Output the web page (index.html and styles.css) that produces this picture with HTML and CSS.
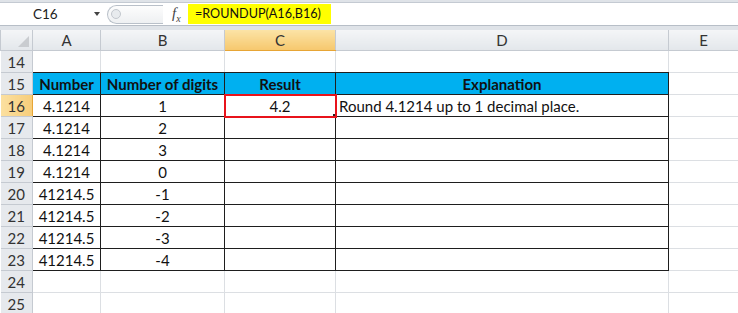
FILE: index.html
```html
<!DOCTYPE html>
<html>
<head>
    <title>ROUNDUP example</title>
    <link rel="stylesheet" href="styles.css">
</head>
<body>

<!-- Formula bar -->
<div class="top-strip"></div>
<div class="formula-bar">
    <div class="name-box">
        <span class="cell-ref">C16</span>
        <span class="drop"></span>
    </div>
    <div class="splitter"><span class="knob"></span></div>
    <div class="fx"><i>f</i><sub>x</sub></div>
    <div class="formula"><span class="hl">=ROUNDUP(A16,B16)</span></div>
</div>
<div class="bar-gap"></div>

<!-- Sheet -->
<table class="sheet">
    <colgroup>
        <col style="width:32px">
        <col style="width:68px">
        <col style="width:124px">
        <col style="width:111px">
        <col style="width:333px">
        <col style="width:70px">
    </colgroup>
    <tr class="col-heads">
        <th class="corner"><span class="tri"></span></th>
        <th>A</th>
        <th>B</th>
        <th class="sel">C</th>
        <th>D</th>
        <th>E</th>
    </tr>
    <tr>
        <th class="row-head">14</th>
        <td class="above"></td><td class="above"></td><td class="above"></td><td class="above"></td><td></td>
    </tr>
    <tr class="head-row">
        <th class="row-head">15</th>
        <td class="t">Number</td>
        <td class="t">Number of digits</td>
        <td class="t">Result</td>
        <td class="t">Explanation</td>
        <td></td>
    </tr>
    <tr>
        <th class="row-head sel">16</th>
        <td class="t">4.1214</td>
        <td class="t">1</td>
        <td class="t active">4.2</td>
        <td class="t left">Round 4.1214 up to 1 decimal place.</td>
        <td></td>
    </tr>
    <tr>
        <th class="row-head">17</th>
        <td class="t">4.1214</td><td class="t">2</td><td class="t"></td><td class="t"></td><td></td>
    </tr>
    <tr>
        <th class="row-head">18</th>
        <td class="t">4.1214</td><td class="t">3</td><td class="t"></td><td class="t"></td><td></td>
    </tr>
    <tr>
        <th class="row-head">19</th>
        <td class="t">4.1214</td><td class="t">0</td><td class="t"></td><td class="t"></td><td></td>
    </tr>
    <tr>
        <th class="row-head">20</th>
        <td class="t">41214.5</td><td class="t">-1</td><td class="t"></td><td class="t"></td><td></td>
    </tr>
    <tr>
        <th class="row-head">21</th>
        <td class="t">41214.5</td><td class="t">-2</td><td class="t"></td><td class="t"></td><td></td>
    </tr>
    <tr>
        <th class="row-head">22</th>
        <td class="t">41214.5</td><td class="t">-3</td><td class="t"></td><td class="t"></td><td></td>
    </tr>
    <tr>
        <th class="row-head">23</th>
        <td class="t">41214.5</td><td class="t">-4</td><td class="t"></td><td class="t"></td><td></td>
    </tr>
    <tr>
        <th class="row-head">24</th>
        <td></td><td></td><td></td><td></td><td></td>
    </tr>
    <tr>
        <th class="row-head">25</th>
        <td></td><td></td><td></td><td></td><td></td>
    </tr>
</table>

</body>
</html>
```

FILE: styles.css
```css
/* Basic styling */
body {
    margin: 0;
    width: 738px;
    height: 313px;
    overflow: hidden;
    background: #fff;
    font-family: Lato, "Open Sans", sans-serif;
    color: #111;
}

/* Formula bar */
.top-strip {
    height: 2px;
    background: #dfe3e8;
    border-bottom: 1px solid #c4cad2;
}
.formula-bar {
    display: flex;
    align-items: center;
    height: 22px;
    background: #fff;
    border-bottom: 1px solid #b7bec7;
}
.name-box {
    display: flex;
    align-items: center;
    width: 104px;
    height: 100%;
    box-sizing: border-box;
    position: relative;
}
.cell-ref {
    margin-left: 33px;
    font-size: 13.5px;
    color: #222;
}
.drop {
    position: absolute;
    left: 94px;
    top: 9px;
    border-left: 3px solid transparent;
    border-right: 3px solid transparent;
    border-top: 4px solid #444;
}
.splitter {
    width: 56px;
    height: 19px;
    margin-left: 3px;
    box-sizing: border-box;
    border: 1px solid #b9c0c9;
    border-right: none;
    border-radius: 10px 0 0 10px;
    background: linear-gradient(#fdfdfd, #eef0f2);
    display: flex;
    align-items: center;
}
.knob {
    width: 8px;
    height: 8px;
    margin-left: 3px;
    border-radius: 50%;
    border: 1px solid #c3c8ce;
    background: #e8ebee;
}
.fx {
    width: 16px;
    padding-left: 9px;
    font-family: "Liberation Serif", serif;
    font-size: 15px;
    color: #444;
}
.fx sub {
    font-size: 10px;
    font-style: italic;
}
.formula {
    flex: 1;
    height: 100%;
    display: flex;
    align-items: center;
}
.hl {
    background: #ffff00;
    padding: 1px 10px 1px 7px;
    line-height: 18px;
    font-size: 12.6px;
    color: #111;
}
.bar-gap {
    height: 4px;
    background: #dfe3e8;
}

/* Sheet grid */
.sheet {
    table-layout: fixed;
    width: 738px;
    border-collapse: collapse;
    font-size: 15px;
}
.sheet tr {
    height: 22px;
}
.sheet td {
    padding: 0;
    border: 1px solid #dcdfe3;
    text-align: center;
    white-space: nowrap;
    overflow: hidden;
}
.col-heads {
    height: 20px !important;
}
.col-heads th {
    font-weight: normal;
    color: #333;
    background: linear-gradient(#f4f5f7, #e3e7eb);
    border: 1px solid #c5cad1;
    border-top: none;
}
.col-heads th.sel {
    background: linear-gradient(#fbe3a6, #f6c86e);
    border-bottom: 1px solid #e7a535;
}
.corner {
    position: relative;
}
.tri {
    position: absolute;
    right: 3px;
    bottom: 3px;
    border-left: 11px solid transparent;
    border-bottom: 11px solid #c9ccd0;
}
.row-head {
    font-weight: normal;
    color: #333;
    background: #e6e9ed;
    border: 1px solid #c5cad1;
    border-left: none;
}
.row-head.sel {
    background: linear-gradient(90deg, #fbe0a0, #f7cd7a);
    border-right: 1px solid #e7a535;
}

/* Example table */
.sheet td.above {
    border-bottom: 1px solid #1e1e1e;
}
.sheet td.t {
    border: 1px solid #1e1e1e;
}
.head-row td.t {
    background: #00b0f0;
    font-weight: bold;
}
.sheet td.left {
    text-align: left;
    padding-left: 3px;
}
.sheet td.active {
    outline: 2px solid #e8131b;
    outline-offset: -1px;
    position: relative;
}
.sheet td.active::after {
    content: "";
    position: absolute;
    right: -3px;
    bottom: -3px;
    width: 4px;
    height: 4px;
    background: #222;
    border: 1px solid #fff;
}
```
